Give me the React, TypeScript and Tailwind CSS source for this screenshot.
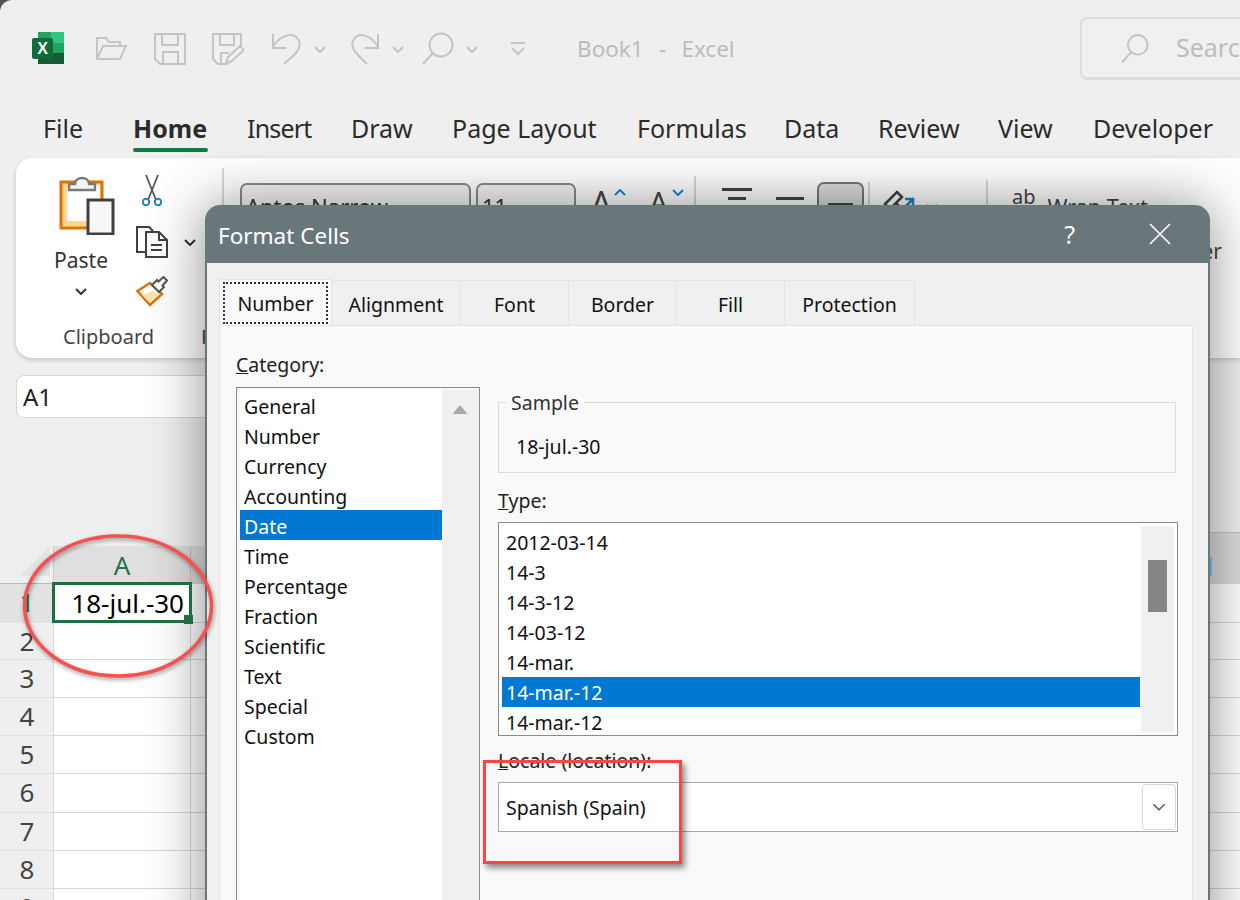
const menuTabs = [
  { label: 'File', cls: 'w-[133px] pl-[43px]' },
  { label: 'Home', cls: 'w-[114px] font-bold' },
  { label: 'Insert', cls: 'w-[104px] tracking-[-0.8px]' },
  { label: 'Draw', cls: 'w-[101px]' },
  { label: 'Page Layout', cls: 'w-[185px]' },
  { label: 'Formulas', cls: 'w-[147px]' },
  { label: 'Data', cls: 'w-[94px]' },
  { label: 'Review', cls: 'w-[120px]' },
  { label: 'View', cls: 'w-[95px]' },
  { label: 'Developer', cls: 'w-[147px]' },
]

const dialogTabs = [
  { label: 'Number', cls: 'w-[113px]' },
  { label: 'Alignment', cls: 'w-[129px]' },
  { label: 'Font', cls: 'w-[108px]' },
  { label: 'Border', cls: 'w-[108px]' },
  { label: 'Fill', cls: 'w-[108px]' },
  { label: 'Protection', cls: 'w-[130px]' },
]

const categories = ['General', 'Number', 'Currency', 'Accounting', 'Date', 'Time', 'Percentage', 'Fraction', 'Scientific', 'Text', 'Special', 'Custom']
const types = ['2012-03-14', '14-3', '14-3-12', '14-03-12', '14-mar.', '14-mar.-12', '14-mar.-12']

const sheetRows = [
  { n: 1, cls: 'h-[39px]' },
  { n: 2, cls: 'h-[37px]' },
  { n: 3, cls: 'h-[38px]' },
  { n: 4, cls: 'h-[38px]' },
  { n: 5, cls: 'h-[38px]' },
  { n: 6, cls: 'h-[39px]' },
  { n: 7, cls: 'h-[38px]' },
  { n: 8, cls: 'h-[38px]' },
  { n: 9, cls: 'h-[38px]' },
]

function Chevron({ cls, color = '#c4c4c4', sw = 2 }: { cls: string; color?: string; sw?: number }) {
  return (
    <svg viewBox="0 0 12 7" className={cls} fill="none" stroke={color} strokeWidth={sw}>
      <path d="M1 1l5 5 5-5" />
    </svg>
  )
}

function ExcelLogo() {
  return (
    <svg viewBox="0 0 32 32" className="w-[32px] h-[32px]">
      <rect x="6" y="0" width="13" height="11" fill="#21a366" />
      <rect x="19" y="0" width="13" height="11" fill="#33c481" />
      <rect x="6" y="11" width="13" height="10" fill="#107c41" />
      <rect x="19" y="11" width="13" height="10" fill="#21a366" />
      <rect x="6" y="21" width="26" height="11" fill="#185c37" />
      <rect x="0" y="6" width="21" height="21" rx="2" fill="#0f6b39" />
      <text x="10.5" y="22" textAnchor="middle" fontSize="16" fontWeight="700" fill="#fff" fontFamily="Liberation Sans">X</text>
    </svg>
  )
}

function QuickBar() {
  return (
    <div className="h-[100px] flex shrink-0">
      <div className="pl-[32px] pt-[32px]"><ExcelLogo /></div>
      <svg viewBox="0 0 32 24" className="ml-[32px] mt-[36px] w-[32px] h-[24px]" fill="none" stroke="#c4c4c4" strokeWidth="2">
        <path d="M1 23V2h9l3 4h11v4M1 23h23l6-13H7z" />
      </svg>
      <svg viewBox="0 0 32 32" className="ml-[26px] mt-[33px] w-[32px] h-[32px]" fill="none" stroke="#c4c4c4" strokeWidth="2">
        <path d="M1 1h30v30H6l-5-5zM8 1v11h16V1M9 31V19h15v12" />
      </svg>
      <svg viewBox="0 0 32 32" className="ml-[26px] mt-[33px] w-[32px] h-[32px]" fill="none" stroke="#c4c4c4" strokeWidth="2">
        <path d="M14 31H6l-5-5V1h28v14M8 1v11h14V1M9 31V20h8" />
        <path d="M14 31l2-7 12-11 4 4-12 11z" />
      </svg>
      <svg viewBox="0 0 30 32" className="ml-[28px] mt-[33px] w-[30px] h-[32px]" fill="none" stroke="#c4c4c4" strokeWidth="2">
        <path d="M1 1v14h13M1 14C7 3 20-2 26 6c4 6 0 12-4 16L12 31" />
      </svg>
      <Chevron cls="ml-[12px] mt-[46px] w-[12px] h-[7px]" />
      <svg viewBox="0 0 30 32" className="ml-[24px] mt-[33px] w-[30px] h-[32px]" fill="none" stroke="#c4c4c4" strokeWidth="2">
        <path d="M28 1v14H15M28 14C22 3 9-2 4 6c-4 6 0 12 4 16l9 9" />
      </svg>
      <Chevron cls="ml-[12px] mt-[46px] w-[12px] h-[7px]" />
      <svg viewBox="0 0 32 32" className="ml-[18px] mt-[32px] w-[32px] h-[32px]" fill="none" stroke="#c4c4c4" strokeWidth="2">
        <circle cx="19" cy="13" r="11.5" />
        <path d="M11 21L1 32" />
      </svg>
      <Chevron cls="ml-[12px] mt-[46px] w-[12px] h-[7px]" />
      <svg viewBox="0 0 16 14" className="ml-[32px] mt-[42px] w-[16px] h-[14px]" fill="none" stroke="#c4c4c4" strokeWidth="2">
        <path d="M1 1h14M2 6l6 6 6-6" />
      </svg>
      <div className="ml-[51px] mt-[34px] h-[30px] leading-[30px] text-[22.5px] text-[#bdbdbd] whitespace-pre [word-spacing:1.75px]">Book1  -  Excel</div>
      <div className="ml-auto mt-[17px] w-[160px] h-[63px] bg-[#f0f0f0] border-2 border-r-0 border-[#dcdcdc] border-b-[3px] rounded-l-[7px] flex items-center overflow-hidden">
        <svg viewBox="0 0 30 32" className="ml-[39px] w-[28px] h-[31px] shrink-0" fill="none" stroke="#c4c4c4" strokeWidth="2">
          <circle cx="18" cy="12" r="10.5" />
          <path d="M11 20L1 31" />
        </svg>
        <span className="ml-[27px] text-[25px] text-[#bdbdbd]">Search</span>
      </div>
    </div>
  )
}

function MenuTabs() {
  return (
    <div className="h-[58px] flex shrink-0">
      {menuTabs.map((t) => (
        <div key={t.label} className={`${t.cls} shrink-0`}>
          <div className="w-max">
            <div className="h-[48px] pt-[9px] leading-[38px] text-[25px] text-[#2b2b2b] whitespace-nowrap">{t.label}</div>
            {t.label === 'Home' && <div className="h-[4px] w-[75px] rounded-sm bg-[#107c41]" />}
          </div>
        </div>
      ))}
    </div>
  )
}

function Ribbon() {
  return (
    <div className="ml-[16px] h-[200px] shrink-0 bg-white rounded-l-[16px] shadow-[0_2px_5px_rgba(0,0,0,0.18)] flex overflow-hidden">
      <div className="w-[206px] shrink-0 flex flex-col">
        <div className="h-[165px] flex">
          <div className="w-[120px] pl-[10px] flex flex-col items-center">
            <svg viewBox="0 0 56 62" className="mt-[15px] ml-[12px] w-[56px] h-[62px]">
              <rect x="2" y="9" width="41" height="46" fill="#fbd98c" stroke="#e07000" strokeWidth="3" />
              <rect x="8" y="12" width="33" height="36" fill="#fff" />
              <path d="M10 17v-6h6c0-8 14-8 14 0h6v6z" fill="#f4f4f4" stroke="#7a7a7a" strokeWidth="2.5" />
              <rect x="29" y="27" width="25" height="34" fill="#f7f7f7" stroke="#404040" strokeWidth="3" />
            </svg>
            <div className="mt-[11px] text-[21px] leading-[28px] text-[#333]">Paste</div>
            <Chevron cls="mt-[14px] w-[12px] h-[7px]" color="#333" />
          </div>
          <div className="w-[32px] shrink-0">
            <svg viewBox="0 0 20 32" className="ml-[6px] mt-[16px] w-[20px] h-[32px]" fill="none">
              <path d="M4 1l10 25M16 1L6 26" stroke="#555" strokeWidth="1.8" />
              <circle cx="4" cy="28" r="3.2" stroke="#1a86c8" strokeWidth="2" />
              <circle cx="16" cy="28" r="3.2" stroke="#1a86c8" strokeWidth="2" />
            </svg>
            <svg viewBox="0 0 32 32" className="mt-[20px] w-[32px] h-[32px]" fill="none" stroke="#404040" strokeWidth="2">
              <path d="M11 26H1V1h12l4 4" />
              <path d="M10 6h13l8 8v17H10z" fill="#fff" />
              <path d="M23 6v8h8M15 19h11M15 24h11" />
            </svg>
            <svg viewBox="0 0 32 32" className="mt-[18px] w-[32px] h-[32px]" fill="none">
              <path d="M1.5 15L14 7l12 11-12 11z" fill="#fff" stroke="#e07000" strokeWidth="2.5" />
              <path d="M6 19l11-4 6 4-9 8z" fill="#fde3b0" />
              <path d="M16 9l5-5 1.5 1.5 5-4.5 3.5 3.5-4.5 5 1.5 1.5-5 5z" fill="#fff" stroke="#555" strokeWidth="2" />
            </svg>
          </div>
          <Chevron cls="ml-[16px] mt-[81px] w-[12px] h-[7px]" color="#333" />
        </div>
        <div className="pl-[47px] text-[20px] leading-[28px] text-[#444] flex whitespace-nowrap">
          Clipboard<span className="ml-[47px]">Font</span>
        </div>
      </div>
      <div className="w-[2px] h-[172px] mt-[10px] bg-[#d8d8d8] shrink-0" />
      <div className="ml-[16px] mt-[25px] w-[231px] h-[46px] border-2 border-[#8a8a8a] rounded-[7px] bg-gradient-to-b from-[#f4f4f4] to-white pl-[4px] text-[22px] leading-[42px] text-[#333] shrink-0">Aptos Narrow</div>
      <div className="ml-[5px] mt-[25px] w-[100px] h-[46px] border-2 border-[#8a8a8a] rounded-[7px] bg-gradient-to-b from-[#f4f4f4] to-white pl-[4px] text-[22px] leading-[42px] text-[#333] shrink-0">11</div>
      <div className="ml-[15px] mt-[20px] w-[20px] text-[32px] leading-[50px] text-[#444] shrink-0">A</div>
      <Chevron cls="mt-[31px] ml-[3px] w-[12px] h-[7px] rotate-180" color="#1a86c8" />
      <div className="ml-[23px] mt-[20px] w-[20px] text-[30px] leading-[50px] text-[#444] shrink-0">A</div>
      <Chevron cls="mt-[31px] ml-[3px] w-[12px] h-[7px]" color="#1a86c8" />
      <div className="ml-[10px] mt-[18px] w-[2px] h-[172px] bg-[#d8d8d8] shrink-0" />
      <div className="ml-[26px] mt-[30px] w-[30px] shrink-0">
        <div className="h-[3px] bg-[#444]" />
        <div className="mt-[6px] mx-[6px] h-[3px] bg-[#444]" />
      </div>
      <div className="ml-[24px] mt-[39px] w-[28px] shrink-0">
        <div className="h-[3px] bg-[#444]" />
        <div className="mt-[6px] mx-[5px] h-[3px] bg-[#444]" />
      </div>
      <div className="ml-[13px] mt-[24px] w-[47px] h-[60px] border-2 border-[#777] rounded-[7px] bg-[#dcdcdc] px-[9px] pt-[19px] shrink-0">
        <div className="h-[3px] bg-[#444]" />
      </div>
      <div className="ml-[4px] mt-[24px] w-[2px] h-[150px] bg-[#d8d8d8] shrink-0" />
      <svg viewBox="0 0 32 30" className="ml-[13px] mt-[32px] w-[32px] h-[30px] shrink-0" fill="none" strokeWidth="2.5">
        <path d="M2 14L14 2l5 5L7 19zM7 21l7-7 5 5-7 7z" stroke="#444" />
        <path d="M22 9h8v8M30 9l-8 8" stroke="#1a86c8" />
      </svg>
      <Chevron cls="ml-[11px] mt-[46px] w-[12px] h-[7px] shrink-0" color="#444" />
      <div className="ml-[48px] mt-[22px] w-[2px] h-[150px] bg-[#d8d8d8] shrink-0" />
      <div className="ml-[24px] mt-[28px] flex flex-col shrink-0">
        <div className="flex h-[40px] items-start">
          <span className="text-[20px] leading-[22px] text-[#444]">ab</span>
          <span className="ml-[12px] mt-[7px] text-[21.5px] leading-[28px] text-[#444]">Wrap Text</span>
        </div>
        <div className="mt-[11px] w-[210px] text-right text-[21px] leading-[28px] text-[#444]">Merge &amp; Center</div>
      </div>
    </div>
  )
}

function NameBox() {
  return (
    <div className="mt-[17px] ml-[16px] w-[230px] h-[43px] bg-white border border-[#d6d6d6] rounded-[8px] pl-[6px] text-[24px] leading-[41px] text-[#222] shrink-0">A1</div>
  )
}

function Sheet() {
  return (
    <div className="mt-[114px] shrink-0">
      <div className="h-[51px] flex items-end">
        <div className="w-[53px] h-[37px] flex justify-end pr-[3px] pb-[3px]">
          <div className="w-[30px] h-[30px] bg-[#e3e3e3] [clip-path:polygon(100%_0,100%_100%,0_100%)]" />
        </div>
        <div className="w-[137px] h-[37px] bg-[#dfdfdf] border-l border-[#c9c9c9] text-center text-[26px] leading-[38px] text-[#217346]">A</div>
        <div className="w-[30px] h-[37px] bg-[#dcdcdc] border-l border-[#c4c4c4]" />
        <div className="flex-1 h-full bg-[#dcdcdc] border-t border-[#c4c4c4]" />
      </div>
      {sheetRows.map((r) => (
        <div key={r.n} className={`${r.cls} flex`}>
          <div className={`w-[53px] shrink-0 border-t text-center pl-[1px] text-[26px] leading-[36px] ${r.n === 1 ? 'bg-[#e2e2e2] border-[#b8b8b8] text-[#217346]' : 'bg-[#efefef] border-[#e2e2e2] text-[#444]'}`}>
            {r.n}
          </div>
          {r.n === 1 ? (
            <div className="w-[140px] shrink-0 relative border-[3px] border-[#1e6e42] -ml-[1px] -mr-[2px] -my-[1px] bg-white pr-[5px] text-right text-[26px] leading-[36px] text-black z-10 whitespace-nowrap">
              18-jul.-30
              <div className="absolute right-[-4px] bottom-[-4px] w-[9px] h-[9px] bg-[#1e6e42]" />
            </div>
          ) : (
            <div className="w-[137px] shrink-0 bg-white border-t border-l border-[#d8d8d8]" />
          )}
          <div className="flex-1 bg-white border-t border-l border-[#d8d8d8]" />
        </div>
      ))}
    </div>
  )
}

function FormatCellsDialog() {
  return (
    <div className="absolute left-[205px] top-[205px] w-[1005px] h-[760px] rounded-t-[15px] shadow-[0_0_55px_rgba(0,0,0,0.45)] flex flex-col">
      <div className="h-[58px] shrink-0 bg-[#69777b] rounded-t-[15px] flex items-center text-white">
        <span className="ml-[13px] pt-[3px] text-[22.5px]">Format Cells</span>
        <span className="ml-auto text-[25px] leading-none">?</span>
        <svg viewBox="0 0 22 22" className="ml-[74px] mr-[39px] w-[22px] h-[22px]" fill="none" stroke="#fff" strokeWidth="1.6">
          <path d="M1 1l20 20M21 1L1 21" />
        </svg>
      </div>
      <div className="flex-1 bg-[#f0f0f0] border-x-2 border-[#69777b] pl-[12px] pr-[15px] pt-[17px] flex flex-col text-[19.5px]">
        <div className="flex h-[45px] shrink-0">
          {dialogTabs.map((t, i) => (
            <div key={t.label} className={`${t.cls} ${i === 0 ? 'bg-[#f9f9f9] relative z-10 h-[46px] -mt-[1px]' : 'bg-[#f0f0f0] pt-[3px]'} border-t border-r border-[#e4e4e4] first:border-l flex items-center justify-center text-[#111]`}>
              {i === 0 ? (
                <div className="w-[105px] h-[42px] pt-[3px] border-2 border-dotted border-[#333] flex items-center justify-center">{t.label}</div>
              ) : t.label}
            </div>
          ))}
        </div>
        <div className="flex-1 bg-[#f9f9f9] border border-[#e4e4e4] flex pl-[16px]">
          <div className="w-[244px] shrink-0 flex flex-col">
            <div className="h-[61px] pt-[25px] leading-[28px] text-[#222]"><span className="underline">C</span>ategory:</div>
            <div className="flex-1 border border-[#8a8a8a] pl-[3px] pr-[1px] py-[2px] flex">
              <div className="w-[202px] bg-white shrink-0">
                {categories.map((c) => (
                  <div key={c} className={`h-[30px] pl-[4px] leading-[34px] ${c === 'Date' ? 'bg-[#0078d4] text-white' : 'text-[#111]'}`}>{c}</div>
                ))}
              </div>
              <div className="flex-1 bg-[#f0f0f0] flex justify-center pt-[15px]">
                <div className="w-[15px] h-[9px] bg-[#aaa] [clip-path:polygon(50%_0,100%_100%,0_100%)]" />
              </div>
            </div>
          </div>
          <div className="ml-[18px] w-[680px] shrink-0 flex flex-col">
            <div className="relative mt-[76px] w-[678px] h-[71px] border border-[#dcdcdc] pl-[17px] pt-[29px] leading-[30px] text-[#111] shrink-0">
              18-jul.-30
              <span className="absolute left-[7px] -top-[13px] bg-[#f9f9f9] px-[5px] leading-[26px] text-[#333]">Sample</span>
            </div>
            <div className="h-[49px] pt-[14px] leading-[28px] text-[#222] shrink-0"><span className="underline">T</span>ype:</div>
            <div className="h-[214px] border border-[#8a8a8a] bg-white p-[3px] flex shrink-0">
              <div className="w-[638px] pt-[1px] shrink-0 overflow-hidden">
                {types.map((t, i) => (
                  <div key={i} className={`h-[30px] pl-[4px] leading-[32px] ${i === 5 ? 'bg-[#0078d4] text-white' : 'text-[#111]'}`}>{t}</div>
                ))}
              </div>
              <div className="ml-[1px] w-[33px] bg-[#f0f0f0] pt-[34px] pl-[7px]">
                <div className="w-[19px] h-[52px] bg-[#858585]" />
              </div>
            </div>
            <div className="h-[46px] pt-[11px] leading-[28px] text-[#222] shrink-0"><span className="underline">L</span>ocale (location):</div>
            <div className="h-[50px] w-[680px] border border-[#a8a8a8] bg-white flex items-center pl-[7px] text-[#111] shrink-0">
              <span className="pt-[2px]">Spanish (Spain)</span>
              <div className="ml-auto mr-[1px] w-[34px] h-[46px] bg-white border border-[#d8d8d8] rounded-sm flex items-center justify-center">
                <Chevron cls="w-[14px] h-[8px]" color="#555" sw={1.2} />
              </div>
            </div>
          </div>
        </div>
      </div>
    </div>
  )
}

export default function App() {
  return (
    <div className="relative w-[1240px] h-[900px] overflow-hidden bg-[#4a565a] font-['Noto_Sans',sans-serif]">
      <div className="w-full h-full bg-[#efefef] rounded-tl-[12px] flex flex-col overflow-hidden">
        <QuickBar />
        <MenuTabs />
        <Ribbon />
        <NameBox />
        <Sheet />
      </div>
      <FormatCellsDialog />
      <div className="absolute left-[1210px] top-[557px] w-[2px] h-[19px] bg-[#5b9bd5]" />
      <svg viewBox="0 0 200 152" className="absolute left-[18px] top-[530px] w-[200px] h-[152px] drop-shadow-[1px_2px_2px_rgba(0,0,0,0.4)]" fill="none">
        <ellipse cx="100" cy="76" rx="93.5" ry="70" stroke="#f75050" strokeWidth="3.5" />
      </svg>
      <div className="absolute left-[483px] top-[760px] w-[199px] h-[104px] border-[3px] border-[#ff4444] shadow-[3px_4px_6px_rgba(0,0,0,0.45)]" />
    </div>
  )
}
